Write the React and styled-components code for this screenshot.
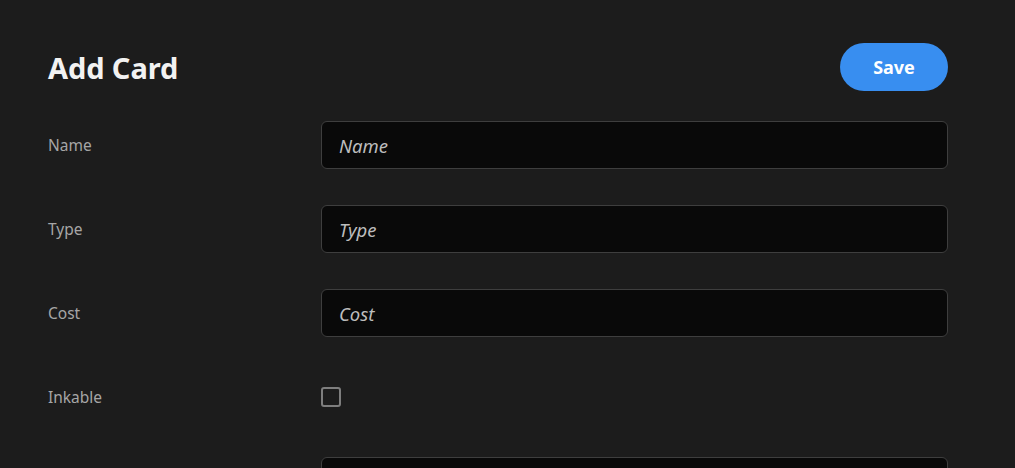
import React from 'react';
import styled, { createGlobalStyle } from 'styled-components';

const GlobalStyle = createGlobalStyle`
  html, body {
    margin: 0;
    padding: 0;
    background: #1c1c1c;
    font-family: "Noto Sans", "Open Sans", sans-serif;
  }
  * { box-sizing: border-box; }
`;

const Page = styled.div`
  min-height: 100vh;
  background: #1c1c1c;
  padding: 43px 0 40px 48px;
`;

const Panel = styled.div`
  width: 900px;
`;

const Header = styled.div`
  display: flex;
  align-items: center;
  justify-content: space-between;
  height: 48px;
  margin-bottom: 30px;
`;

const Title = styled.h1`
  margin: 0;
  font-size: 29px;
  font-weight: 700;
  color: #f2f2f2;
  letter-spacing: -0.1px;
`;

const SaveButton = styled.button`
  width: 108px;
  height: 48px;
  border: none;
  border-radius: 24px;
  background: #388ef0;
  color: #fff;
  font-family: inherit;
  font-size: 18px;
  font-weight: 700;
  cursor: pointer;
`;

const Form = styled.div`
  display: grid;
  grid-template-columns: 273px 1fr;
  row-gap: 36px;
  align-items: center;
`;

const Label = styled.label`
  font-size: 15.5px;
  color: #a6a6a6;
`;

const Input = styled.input`
  width: 100%;
  height: 48px;
  padding: 0 17px;
  background: #090909;
  border: 1px solid #3e3e3e;
  border-radius: 6px;
  color: #eee;
  font-family: inherit;
  font-size: 18.5px;
  outline: none;

  &::placeholder {
    color: #bdbdbd;
    font-style: italic;
  }
`;

const CheckCell = styled.div`
  height: 48px;
  display: flex;
  align-items: center;
`;

const Checkbox = styled.input.attrs({ type: 'checkbox' })`
  appearance: none;
  margin: 0;
  width: 20px;
  height: 20px;
  border: 2px solid #7e7e7e;
  border-radius: 3px;
  background: transparent;
  cursor: pointer;
`;

const fields = ['Name', 'Type', 'Cost'];

export default function App() {
  return (
    <>
      <GlobalStyle />
      <Page>
        <Panel>
          <Header>
            <Title>Add Card</Title>
            <SaveButton>Save</SaveButton>
          </Header>
          <Form>
            {fields.map((f) => (
              <React.Fragment key={f}>
                <Label>{f}</Label>
                <Input placeholder={f} />
              </React.Fragment>
            ))}
            <Label>Inkable</Label>
            <CheckCell>
              <Checkbox />
            </CheckCell>
            <Label />
            <Input />
          </Form>
        </Panel>
      </Page>
    </>
  );
}
